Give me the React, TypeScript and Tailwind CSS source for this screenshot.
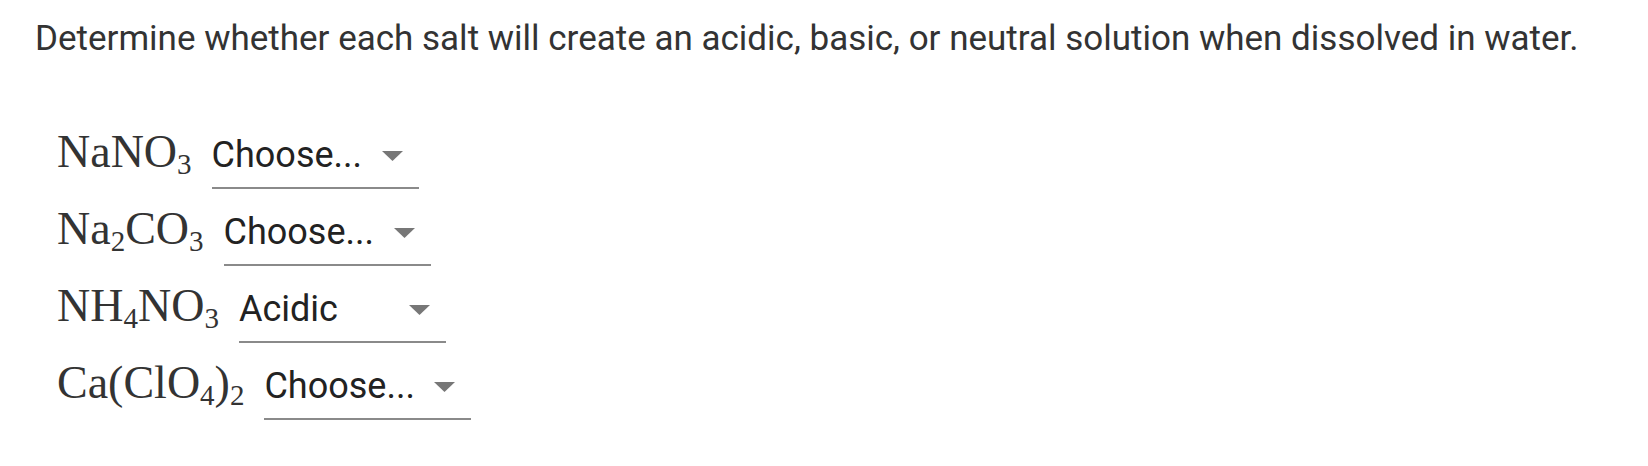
import React from "react";

type Part = { t: string; sub?: boolean };

const salts: { formula: Part[]; value: string }[] = [
  { formula: [{ t: "NaNO" }, { t: "3", sub: true }], value: "Choose..." },
  { formula: [{ t: "Na" }, { t: "2", sub: true }, { t: "CO" }, { t: "3", sub: true }], value: "Choose..." },
  { formula: [{ t: "NH" }, { t: "4", sub: true }, { t: "NO" }, { t: "3", sub: true }], value: "Acidic" },
  { formula: [{ t: "Ca(ClO" }, { t: "4", sub: true }, { t: ")" }, { t: "2", sub: true }], value: "Choose..." },
];

function Formula({ parts }: { parts: Part[] }) {
  return (
    <span className="font-['Liberation_Serif',serif] text-[46px] leading-none text-[#333]">
      {parts.map((p, i) =>
        p.sub ? (
          <span key={i} className="text-[29px] [vertical-align:-0.23em]">
            {p.t}
          </span>
        ) : (
          <span key={i}>{p.t}</span>
        )
      )}
    </span>
  );
}

function Select({ value }: { value: string }) {
  return (
    <div className="relative w-[207px] border-b-2 border-[#8a8a8a] pb-[8px] leading-[35px]">
      <span className="text-[#222] text-[36px]">{value}</span>
      <svg
        className="absolute right-[16px] top-[13px]"
        width="21"
        height="10"
        viewBox="0 0 21 10"
      >
        <path d="M0 0 L21 0 L10.5 10 Z" fill="#777" />
      </svg>
    </div>
  );
}

export default function App() {
  return (
    <div className="w-[1648px] h-[466px] bg-white pl-[35px] pt-[19px] font-['Roboto',sans-serif]">
      <p className="text-[35px] leading-[40px] text-[#333]">
        Determine whether each salt will create an acidic, basic, or neutral solution when dissolved in water.
      </p>
      <div className="mt-[70px] ml-[22px] flex flex-col">
        {salts.map((s, i) => (
          <div key={i} className="flex h-[77px] items-baseline gap-[20px]">
            <Formula parts={s.formula} />
            <Select value={s.value} />
          </div>
        ))}
      </div>
    </div>
  );
}
